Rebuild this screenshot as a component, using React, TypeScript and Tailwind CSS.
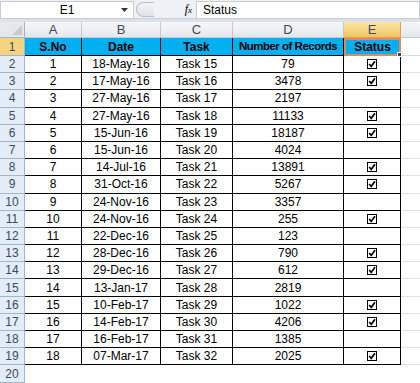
import React from 'react';

type Row = {
  no: number;
  date: string;
  task: string;
  records: number;
  done: boolean;
};

const rows: Row[] = [
  { no: 1, date: '18-May-16', task: 'Task 15', records: 79, done: true },
  { no: 2, date: '17-May-16', task: 'Task 16', records: 3478, done: true },
  { no: 3, date: '27-May-16', task: 'Task 17', records: 2197, done: false },
  { no: 4, date: '27-May-16', task: 'Task 18', records: 11133, done: true },
  { no: 5, date: '15-Jun-16', task: 'Task 19', records: 18187, done: true },
  { no: 6, date: '15-Jun-16', task: 'Task 20', records: 4024, done: false },
  { no: 7, date: '14-Jul-16', task: 'Task 21', records: 13891, done: true },
  { no: 8, date: '31-Oct-16', task: 'Task 22', records: 5267, done: true },
  { no: 9, date: '24-Nov-16', task: 'Task 23', records: 3357, done: false },
  { no: 10, date: '24-Nov-16', task: 'Task 24', records: 255, done: true },
  { no: 11, date: '22-Dec-16', task: 'Task 25', records: 123, done: false },
  { no: 12, date: '28-Dec-16', task: 'Task 26', records: 790, done: true },
  { no: 13, date: '29-Dec-16', task: 'Task 27', records: 612, done: true },
  { no: 14, date: '13-Jan-17', task: 'Task 28', records: 2819, done: false },
  { no: 15, date: '10-Feb-17', task: 'Task 29', records: 1022, done: true },
  { no: 16, date: '14-Feb-17', task: 'Task 30', records: 4206, done: true },
  { no: 17, date: '16-Feb-17', task: 'Task 31', records: 1385, done: false },
  { no: 18, date: '07-Mar-17', task: 'Task 32', records: 2025, done: true },
];

const CheckBox = () => (
  <svg width="10" height="10" viewBox="0 0 10 10">
    <rect x="0.5" y="0.5" width="9" height="9" fill="white" stroke="black" strokeWidth="1" />
    <path d="M2.2 5 L4.2 7.3 L8 2.2" fill="none" stroke="black" strokeWidth="1.7" />
  </svg>
);

const rowHead = 'w-[25px] shrink-0 flex items-center justify-center border-r border-b border-[#9eb6ce] bg-[#e4ecf7] text-[#3b4a63]';
const cell = 'shrink-0 flex items-center justify-center whitespace-nowrap border-r border-b border-black';

const App: React.FC = () => {
  return (
    <div className="w-[420px] h-[383px] overflow-hidden bg-white text-[12px] text-black font-['Liberation_Sans',sans-serif]">
      {/* formula bar */}
      <div className="flex h-[19px] bg-[#eef1f5] border-b border-[#c9d0d9]">
        <div className="w-[134px] h-[18px] mt-px flex items-center bg-white border border-[#c5ccd6]">
          <span className="flex-1 text-center pl-3">E1</span>
          <svg width="7" height="4" viewBox="0 0 7 4" className="mr-[5px]">
            <path d="M0 0 H7 L3.5 4 Z" fill="#333" />
          </svg>
        </div>
        <div className="w-[62px] flex items-center">
          <div className="w-[18px] h-[15px] ml-[2px] rounded-l-full border border-r-0 border-[#b7bec8] bg-gradient-to-b from-[#f4f5f7] to-[#dfe2e6]" />
          <span className="ml-auto mr-[4px] italic text-[12px] font-['Liberation_Serif',serif]">f<span className="text-[9px]">x</span></span>
        </div>
        <div className="flex-1 h-[18px] mt-px flex items-center bg-white border border-[#c5ccd6] pl-[6px]">
          Status
        </div>
      </div>
      <div className="h-[3px] bg-[#dde2e8]" />

      {/* column headers */}
      <div className="flex h-[16px] text-[13px] text-[#3b4a63]">
        <div className="w-[25px] shrink-0 relative border-r border-b border-[#9eb6ce] bg-[#e4e8ee]">
          <svg width="10" height="10" viewBox="0 0 10 10" className="absolute right-[2px] bottom-[2px]">
            <path d="M10 0 V10 H0 Z" fill="#c5cad1" />
          </svg>
        </div>
        {[
          ['A', 'w-[57px]'],
          ['B', 'w-[79px]'],
          ['C', 'w-[72px]'],
          ['D', 'w-[111px]'],
        ].map(([l, w]) => (
          <div key={l} className={`${w} shrink-0 flex items-center justify-center border-r border-b border-[#c0c8d2] bg-gradient-to-b from-[#f6f7f9] to-[#e4e7eb]`}>
            {l}
          </div>
        ))}
        <div className="w-[57px] shrink-0 flex items-center justify-center border-r border-b border-[#e0a247] bg-gradient-to-b from-[#fbe6a8] to-[#f2c560]">
          E
        </div>
        <div className="flex-1 border-b border-[#c0c8d2] bg-gradient-to-b from-[#f6f7f9] to-[#e4e7eb]" />
      </div>

      {/* row 1 */}
      <div className="flex h-[18px] font-bold">
        <div className="w-[25px] shrink-0 flex items-center justify-center border-r border-b border-[#9eb6ce] bg-[#f6d37e] text-[#3b4a63] font-normal">
          1
        </div>
        <div className={`${cell} w-[57px] bg-[#00b0f0]`}>S.No</div>
        <div className={`${cell} w-[79px] bg-[#00b0f0]`}>Date</div>
        <div className={`${cell} w-[72px] bg-[#00b0f0]`}>Task</div>
        <div className={`${cell} w-[111px] bg-[#00b0f0] text-[11.5px] tracking-[-0.5px]`}>Number of Records</div>
        <div className="w-[57px] shrink-0 relative flex items-center justify-center bg-[#00b0f0] border-2 border-[#ea855a]">
          Status
          <div className="absolute -right-[3px] -bottom-[3px] w-[5px] h-[5px] bg-[#444] border border-white" />
        </div>
        <div className="flex-1 border-b border-[#d9d9d9]" />
      </div>

      {/* data rows */}
      {rows.map((r, i) => (
        <div key={r.no} className="flex h-[17.2px]">
          <div className={rowHead}>{i + 2}</div>
          <div className={`${cell} w-[57px]`}>{r.no}</div>
          <div className={`${cell} w-[79px]`}>{r.date}</div>
          <div className={`${cell} w-[72px]`}>{r.task}</div>
          <div className={`${cell} w-[111px]`}>{r.records}</div>
          <div className={`${cell} w-[57px]`}>{r.done && <CheckBox />}</div>
          <div className="flex-1 border-b border-[#e3e3e3]" />
        </div>
      ))}

      {/* row 20 */}
      <div className="flex h-[18px]">
        <div className={rowHead}>20</div>
        <div className="flex-1" />
      </div>
    </div>
  );
};

export default App;
